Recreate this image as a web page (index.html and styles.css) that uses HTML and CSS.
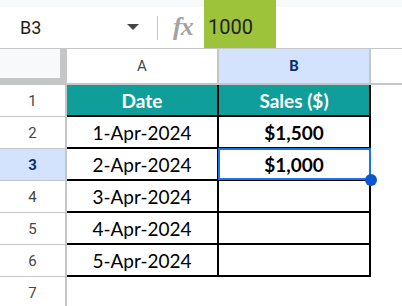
FILE: index.html
```html
<!DOCTYPE html>
<html lang="en">
<head>
    <meta charset="UTF-8">
    <meta name="viewport" content="width=device-width, initial-scale=1.0">
    <title>Sales sheet</title>
    <link rel="stylesheet" href="styles.css">
</head>
<body>
    <div class="formula-bar">
        <div class="name-box">
            <span class="cell-ref">B3</span>
            <span class="caret"></span>
        </div>
        <div class="divider"></div>
        <div class="fx">fx</div>
        <div class="formula-value">1000</div>
    </div>

    <div class="sheet">
        <div class="row col-headers">
            <div class="corner"></div>
            <div class="col-head">A</div>
            <div class="col-head active">B</div>
            <div class="col-rest"></div>
        </div>
        <div class="row">
            <div class="row-head">1</div>
            <div class="cell title">Date</div>
            <div class="cell title">Sales ($)</div>
        </div>
        <div class="row">
            <div class="row-head">2</div>
            <div class="cell">1-Apr-2024</div>
            <div class="cell amount">$1,500</div>
        </div>
        <div class="row">
            <div class="row-head active">3</div>
            <div class="cell">2-Apr-2024</div>
            <div class="cell amount selected">
                $1,000
                <div class="selection"></div>
                <div class="handle"></div>
            </div>
        </div>
        <div class="row">
            <div class="row-head">4</div>
            <div class="cell">3-Apr-2024</div>
            <div class="cell"></div>
        </div>
        <div class="row">
            <div class="row-head">5</div>
            <div class="cell">4-Apr-2024</div>
            <div class="cell"></div>
        </div>
        <div class="row">
            <div class="row-head">6</div>
            <div class="cell">5-Apr-2024</div>
            <div class="cell"></div>
        </div>
        <div class="row">
            <div class="row-head">7</div>
        </div>
    </div>
</body>
</html>
```

FILE: styles.css
```css
body {
    margin: 0;
    width: 402px;
    height: 306px;
    overflow: hidden;
    background: #fff;
    font-family: Roboto, "Liberation Sans", sans-serif;
}

/* formula bar */
.formula-bar {
    display: flex;
    height: 48px;
    border-bottom: 1px solid #c4c7c5;
    box-shadow: inset 0 7px 0 #f8f9fb;
}
.name-box {
    width: 150px;
    box-sizing: border-box;
    display: flex;
    align-items: center;
    justify-content: space-between;
    padding: 6px 11px 0 20px;
    font-size: 18px;
    color: #1f1f1f;
}
.caret {
    width: 0;
    height: 0;
    border-left: 6px solid transparent;
    border-right: 6px solid transparent;
    border-top: 6px solid #444746;
}
.divider {
    width: 1px;
    height: 24px;
    margin: 16px 0 0 7px;
    background: #c7c7c7;
}
.fx {
    width: 22px;
    margin-left: 15px;
    display: flex;
    align-items: center;
    padding-top: 5px;
    font-family: "Liberation Serif", serif;
    font-style: italic;
    font-weight: bold;
    font-size: 26px;
    letter-spacing: -1px;
    color: #a3a3a3;
}
.formula-value {
    width: 72px;
    box-sizing: border-box;
    margin-left: 9px;
    display: flex;
    align-items: center;
    padding: 5px 0 0 4px;
    background: #9dc33b;
    font-size: 20px;
    color: #202124;
}

/* grid */
.row {
    display: flex;
    height: 32px;
}
.col-headers {
    height: 36px;
}
.corner {
    width: 67px;
    box-sizing: border-box;
    background: #f8f9fa;
    border-right: 7px solid #c4c7c5;
    border-bottom: 7px solid #c4c7c5;
}
.col-head {
    width: 152px;
    box-sizing: border-box;
    display: flex;
    align-items: center;
    justify-content: center;
    border-right: 2px solid #c4c7c5;
    border-bottom: 2px solid #c4c7c5;
    font-size: 15px;
    color: #444746;
}
.col-head.active {
    background: #d3e3fd;
    color: #0b2d6b;
    font-weight: bold;
}
.col-rest {
    flex: 1;
    border-bottom: 2px solid #c4c7c5;
}
.row-head {
    width: 67px;
    box-sizing: border-box;
    display: flex;
    align-items: center;
    justify-content: center;
    border-right: 2px solid #c4c7c5;
    border-bottom: 1px solid #c4c7c5;
    font-size: 15px;
    color: #444746;
}
.row-head.active {
    background: #d3e3fd;
    color: #0b2d6b;
    font-weight: bold;
}
.cell {
    width: 152px;
    box-sizing: border-box;
    display: flex;
    align-items: center;
    justify-content: center;
    border-right: 2px solid #000;
    border-bottom: 2px solid #000;
    font-family: Lato, "Liberation Sans", sans-serif;
    font-size: 19px;
    color: #000;
}
.cell.title {
    background: #109e9a;
    color: #fff;
    font-weight: bold;
}
.cell.amount {
    font-weight: bold;
}
.cell.selected {
    position: relative;
}
.selection {
    position: absolute;
    top: -1px;
    left: -1px;
    right: -2px;
    bottom: -1px;
    border: 2px solid #1a73e8;
}
.handle {
    position: absolute;
    right: -8px;
    bottom: -7px;
    width: 12px;
    height: 12px;
    border-radius: 50%;
    background: #0b57d0;
}
```
